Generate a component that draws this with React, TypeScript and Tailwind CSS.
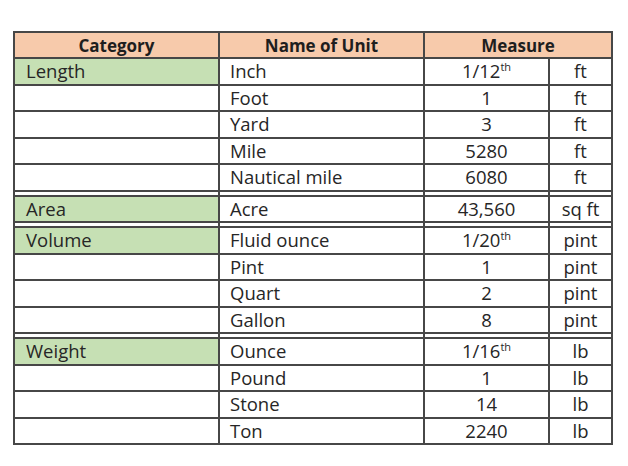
import React from 'react'

type Row = { unit: string; value: React.ReactNode; per: string }
type Section = { category: string; rows: Row[] }

const Nth: React.FC<{ d: string }> = ({ d }) => (
  <span>
    1/{d}
    <sup className="relative -top-[7px] text-[11px]">th</sup>
  </span>
)

const SECTIONS: Section[] = [
  {
    category: 'Length',
    rows: [
      { unit: 'Inch', value: <Nth d="12" />, per: 'ft' },
      { unit: 'Foot', value: '1', per: 'ft' },
      { unit: 'Yard', value: '3', per: 'ft' },
      { unit: 'Mile', value: '5280', per: 'ft' },
      { unit: 'Nautical mile', value: '6080', per: 'ft' }
    ]
  },
  {
    category: 'Area',
    rows: [{ unit: 'Acre', value: '43,560', per: 'sq ft' }]
  },
  {
    category: 'Volume',
    rows: [
      { unit: 'Fluid ounce', value: <Nth d="20" />, per: 'pint' },
      { unit: 'Pint', value: '1', per: 'pint' },
      { unit: 'Quart', value: '2', per: 'pint' },
      { unit: 'Gallon', value: '8', per: 'pint' }
    ]
  },
  {
    category: 'Weight',
    rows: [
      { unit: 'Ounce', value: <Nth d="16" />, per: 'lb' },
      { unit: 'Pound', value: '1', per: 'lb' },
      { unit: 'Stone', value: '14', per: 'lb' },
      { unit: 'Ton', value: '2240', per: 'lb' }
    ]
  }
]

const cell = 'border-2 border-[#474747] p-0'

export default function App() {
  return (
    <div className="h-[466px] w-[628px] bg-white pl-[13px] pt-[31px] font-['Open_Sans','Liberation_Sans',sans-serif] text-[18.5px] leading-none text-[#262626]">
      <table className="w-[598px] table-fixed border-collapse">
        <colgroup>
          <col className="w-[205px]" />
          <col className="w-[205px]" />
          <col className="w-[125px]" />
          <col className="w-[63px]" />
        </colgroup>
        <thead>
          <tr className="h-[26px] bg-[#f7caab] text-[17px] font-bold text-[#1e1e1e]">
            <th className={cell}>Category</th>
            <th className={cell}>Name of Unit</th>
            <th className={cell} colSpan={2}>
              Measure
            </th>
          </tr>
        </thead>
        {SECTIONS.map((section, si) => (
          <tbody key={section.category}>
            {si > 0 && (
              <tr className="h-[5px]">
                <td className={cell} />
                <td className={cell} />
                <td className={cell} />
                <td className={cell} />
              </tr>
            )}
            {section.rows.map((row, ri) => (
              <tr className="h-[26.5px]" key={row.unit}>
                <td className={`${cell} pl-[11px] ${ri === 0 ? 'bg-[#c6e0b4]' : ''}`}>
                  {ri === 0 ? section.category : ''}
                </td>
                <td className={`${cell} pl-[10px]`}>{row.unit}</td>
                <td className={`${cell} text-center`}>{row.value}</td>
                <td className={`${cell} text-center`}>{row.per}</td>
              </tr>
            ))}
          </tbody>
        ))}
      </table>
    </div>
  )
}
